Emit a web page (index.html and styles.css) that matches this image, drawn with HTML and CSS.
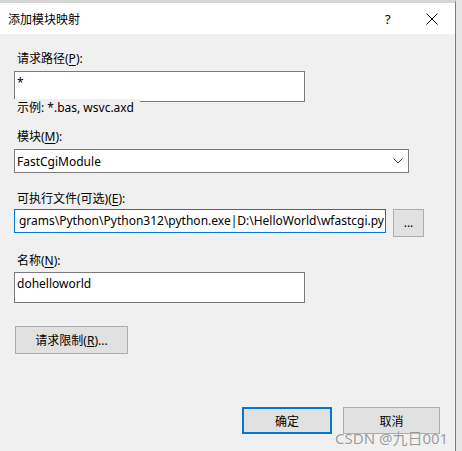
FILE: index.html
```html
<!DOCTYPE html>
<html lang="zh-CN">
<head>
    <meta charset="UTF-8">
    <title>添加模块映射</title>
    <link rel="stylesheet" href="styles.css">
</head>
<body>
    <div class="dialog">
        <div class="dialog-title">
            <span class="title-text">添加模块映射</span>
            <span class="title-help">?</span>
            <span class="title-close">
                <svg width="12" height="12" viewBox="0 0 12 12"><path d="M0.5 0.5 L11.5 11.5 M11.5 0.5 L0.5 11.5" stroke="#000" stroke-width="1" fill="none"/></svg>
            </span>
        </div>

        <div class="dialog-body">
            <div class="label label-path">请求路径(<u>P</u>):</div>
            <div class="field field-tall field-short">*</div>
            <div class="hint">示例: *.bas, wsvc.axd</div>

            <div class="label label-module">模块(<u>M</u>):</div>
            <div class="select">
                <span>FastCgiModule</span>
                <svg width="10" height="6" viewBox="0 0 10 6"><path d="M0.5 0.5 L5 5 L9.5 0.5" stroke="#333" stroke-width="1" fill="none"/></svg>
            </div>

            <div class="label label-exe">可执行文件(可选)(<u>E</u>):</div>
            <div class="exe-row">
                <div class="field field-exe"><span>grams\Python\Python312\python.exe|D:\HelloWorld\wfastcgi.py</span></div>
                <button class="btn btn-browse">...</button>
            </div>

            <div class="label label-name">名称(<u>N</u>):</div>
            <div class="field field-tall field-short">dohelloworld</div>

            <button class="btn btn-limit">请求限制(<u>R</u>)...</button>

            <div class="dialog-footer">
                <button class="btn btn-ok">确定</button>
                <button class="btn btn-cancel">取消</button>
            </div>
        </div>

        <div class="watermark">CSDN @九日001</div>
    </div>
</body>
</html>
```

FILE: styles.css
```css
* {
  margin: 0;
  padding: 0;
  box-sizing: border-box;
}

body {
  width: 462px;
  height: 451px;
  overflow: hidden;
  background: #e6e6e6;
  font-family: "Noto Sans", "Noto Sans CJK SC", sans-serif;
  font-size: 12px;
  color: #000;
}

.dialog {
  position: relative;
  width: 456px;
  height: 451px;
  border-top: 3px solid #d6d6d6;
  border-right: 1px solid #7a7a7a;
  background: #f0f0f0;
}

.dialog-title {
  height: 31px;
  background: #fff;
  display: flex;
  align-items: center;
  padding-left: 8px;
}

.title-text {
  flex: 1;
}

.title-help {
  width: 12px;
  margin-right: 29px;
  font-size: 13px;
}

.title-close {
  display: flex;
  margin-right: 17px;
}

.dialog-body {
  padding: 17px 0 0 14px;
}

.label {
  height: 16px;
  line-height: 16px;
  padding-left: 3px;
}

.label u {
  text-underline-offset: 2px;
}

.field {
  background: #fff;
  border: 1px solid #7a7a7a;
  line-height: 16px;
  padding: 3px 2px 0;
  white-space: nowrap;
  overflow: hidden;
}

.field-tall {
  height: 31px;
}

.field-short {
  width: 291px;
}

.label-path + .field {
  margin-top: 4px;
}

.hint {
  width: 126px;
  height: 18px;
  line-height: 18px;
  margin-top: -3px;
  padding-left: 3px;
  background: #f0f0f0;
  color: #000;
}

.label-module {
  margin-top: 12px;
}

.select {
  width: 395px;
  height: 24px;
  margin-top: 4px;
  background: #fff;
  border: 1px solid #7a7a7a;
  display: flex;
  align-items: center;
  justify-content: space-between;
  padding: 0 5px 0 2px;
}

.label-exe {
  margin-top: 18px;
}

.exe-row {
  display: flex;
  gap: 7px;
  margin-top: 2px;
}

.field-exe {
  width: 372px;
  height: 24px;
  border-color: #0078d7;
  display: flex;
  align-items: center;
  justify-content: flex-end;
  padding: 0 1px 0 0;
}

.btn {
  font-family: inherit;
  font-size: 12px;
  color: #000;
  background: #e1e1e1;
  border: 1px solid #adadad;
  height: 28px;
}

.btn-browse {
  width: 31px;
  line-height: 12px;
}

.label-name {
  margin-top: 16px;
}

.label-name + .field {
  margin-top: 3px;
}

.btn-limit {
  display: block;
  width: 113px;
  margin: 23px 0 0 1px;
}

.dialog-footer {
  display: flex;
  margin-top: 53px;
  padding-left: 228px;
  gap: 11px;
}

.btn-ok,
.btn-cancel {
  height: 27px;
}

.btn-ok {
  width: 90px;
  border: 2px solid #0078d7;
}

.btn-cancel {
  width: 97px;
}

/* 水印，压在按钮上面 */
.watermark {
  position: absolute;
  left: 335px;
  top: 424px;
  font-size: 15px;
  color: rgba(120, 120, 120, 0.75);
  text-shadow: 0 0 1px #fff;
}
```
